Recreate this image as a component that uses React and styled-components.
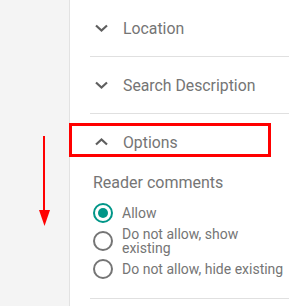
import React from 'react';
import styled, { createGlobalStyle } from 'styled-components';

const Global = createGlobalStyle`
  html, body { margin: 0; padding: 0; background: #fff; }
  body { font-family: Roboto, "Liberation Sans", sans-serif; }
`;

const Page = styled.div`
  display: flex;
  width: 305px;
  height: 306px;
  overflow: hidden;
`;

const Sidebar = styled.div`
  position: relative;
  width: 69px;
  flex-shrink: 0;
  background: #f4f4f4;
  border-right: 1px solid #e2e2e2;
`;

const Arrow = styled.svg`
  position: absolute;
  left: 38px;
  top: 136px;
`;

const Panel = styled.div`
  position: relative;
  width: 199px;
  padding-left: 20px;
`;

const Section = styled.div`
  border-bottom: 1px solid #e0e0e0;
`;

const Header = styled.div`
  position: relative;
  display: flex;
  align-items: center;
  height: 56px;
  padding-left: 5px;
  gap: 15px;
  font-size: 15.8px;
  color: #757575;
`;

const Chevron = styled.svg`
  flex-shrink: 0;
`;

const Highlight = styled.div`
  position: absolute;
  left: -21px;
  top: 9px;
  width: 196px;
  height: 28px;
  border: 3px solid #ff0000;
`;

const Body = styled.div`
  padding: 3px 0 19px 3px;
`;

const Label = styled.div`
  font-size: 16px;
  line-height: 19px;
  color: #757575;
  margin-bottom: 11px;
`;

const Options = styled.div`
  display: flex;
  flex-direction: column;
  gap: 4px;
`;

const Option = styled.label`
  display: flex;
  align-items: center;
  gap: 9px;
  font-size: 14px;
  line-height: 14px;
  color: #757575;
`;

const OptionText = styled.span`
  max-width: ${(p) => p.$max || 'none'};
`;

const Radio = styled.span`
  width: 20px;
  height: 20px;
  box-sizing: border-box;
  border-radius: 50%;
  border: 2px solid ${(p) => (p.$on ? '#009688' : '#757575')};
  flex-shrink: 0;
  display: flex;
  align-items: center;
  justify-content: center;
  &::after {
    content: '';
    width: 10px;
    height: 10px;
    border-radius: 50%;
    background: ${(p) => (p.$on ? '#009688' : 'transparent')};
  }
`;

const ChevronIcon = ({ up }) => (
  <Chevron width="13" height="8" viewBox="0 0 13 8">
    <path
      d={up ? 'M1 6.5 L6.5 1.5 L12 6.5' : 'M1 1.5 L6.5 6.5 L12 1.5'}
      fill="none"
      stroke="#5f5f5f"
      strokeWidth="2.2"
    />
  </Chevron>
);

const options = [
  { text: 'Allow', on: true },
  { text: 'Do not allow, show existing', on: false, max: '140px' },
  { text: 'Do not allow, hide existing', on: false },
];

export default function App() {
  return (
    <Page>
      <Global />
      <Sidebar>
        <Arrow width="14" height="92" viewBox="0 0 14 92">
          <line x1="6" y1="0" x2="6" y2="76" stroke="#ff0000" strokeWidth="2" />
          <path d="M1 74 L12 74 L6.5 90 Z" fill="#ff0000" />
        </Arrow>
      </Sidebar>
      <Panel>
        <Section>
          <Header>
            <ChevronIcon />
            Location
          </Header>
        </Section>
        <Section>
          <Header>
            <ChevronIcon />
            Search Description
          </Header>
        </Section>
        <Section>
          <Header>
            <ChevronIcon up />
            Options
            <Highlight />
          </Header>
          <Body>
            <Label>Reader comments</Label>
            <Options>
              {options.map((o) => (
                <Option key={o.text}>
                  <Radio $on={o.on} />
                  <OptionText $max={o.max}>{o.text}</OptionText>
                </Option>
              ))}
            </Options>
          </Body>
        </Section>
      </Panel>
    </Page>
  );
}
